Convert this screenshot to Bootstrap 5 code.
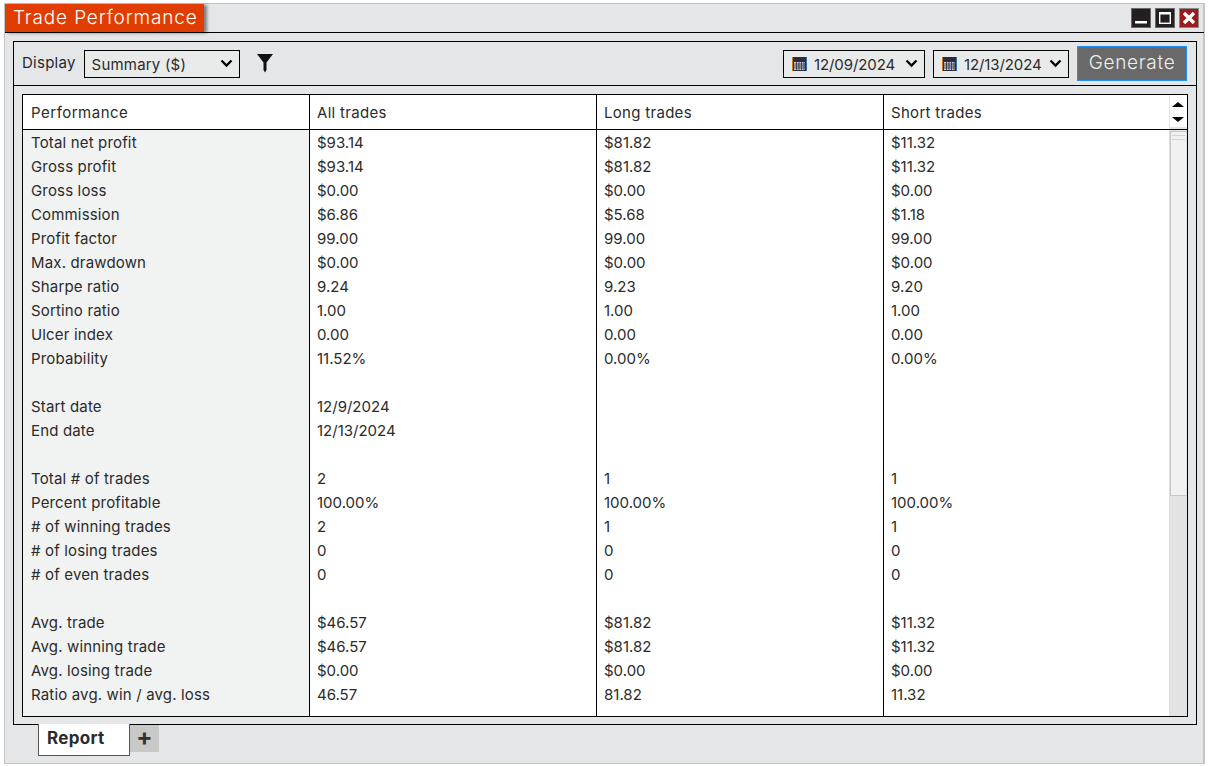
<!DOCTYPE html>
<html lang="en">
<head>
  <meta charset="UTF-8">
  <title>Trade Performance</title>
  <link href="https://cdn.jsdelivr.net/npm/bootstrap@5.3.3/dist/css/bootstrap.min.css" rel="stylesheet">
  <style>
    html, body { height: 100%; }
    body { background: #fff; padding: 3px 4px 2px 4px; font-family: Inter, "Open Sans", sans-serif; font-size: 15px; color: #2b2b2b; overflow: hidden; }
    .win { height: 761px; width: 1201px; background: #e5e6e8; border: 1px solid #c4c4c4; border-right-width: 2px; }
    .title-row { height: 29px; border-bottom: 1px solid #000; margin-right: -1px; }
    .title-tag { height: 28px; width: 199px; background: #e23d00; color: #fff; font-size: 19px; font-weight: 300; letter-spacing: .85px; line-height: 27px; padding-left: 8px; box-shadow: 3px 1px 3px rgba(0,0,0,.45); white-space: nowrap; }
    .win-btns { gap: 4px; padding: 4px 5px 0 0; }
    .win-btn { width: 20px; height: 20px; display: block; }
    .panel { margin: 8px 8px 0 8px; height: 684px; border: 1px solid #000; width: 1184px; }
    .tools { height: 44px; border-bottom: 1px solid #000; padding: 0 9px 0 8px; }
    .tool-label { font-size: 15px; color: #1f2a33; letter-spacing: .25px; }
    .pick { height: 28px; background: #e9eaea; border: 1px solid #000; color: #2b2b2b; font-size: 15px; padding: 3px 6px 0 7px; }
    .pick-arrow { margin-top: -3px; }
    .pick-display { width: 156px; margin-left: 8px; letter-spacing: .2px; }
    .pick-date1 { width: 142px; letter-spacing: -.1px; padding-left: 8px; }
    .pick-date2 { width: 136px; margin-left: 8px; margin-right: 8px; letter-spacing: -.1px; padding-left: 8px; }
    .date-ico { margin-top: -2px; margin-right: -1px; }
    .filter-ico { margin-left: 17px; margin-top: -1px; }
    .gen-btn { width: 110px; height: 35px; background: #696969; border: 1px solid #1e90ff; color: #eee; font-size: 19px; font-weight: 300; letter-spacing: .7px; padding: 0; }
    .sheet { margin: 8px 8px 0 8px; height: 623px; width: 1166px; background: #fff; border: 1px solid #000; }
    .head-row { height: 35px; border-bottom: 1px solid #000; }
    .col-cell { width: 287px; flex: none; padding-left: 7px; border-right: 1px solid #000; letter-spacing: .3px; line-height: 35px; }
    .col-cell.first { padding-left: 8px; letter-spacing: .5px; }
    .col-last { flex: 1; border-right: 0; }
    .spin-box { width: 18px; background: #fff; box-shadow: inset 1px 0 0 #e4e4e4, inset 0 -2px 0 #e4e4e4; padding-top: 7px; gap: 10px; }
    .spin-box svg { display: block; }
    .body-row { height: 586px; overflow: hidden; }
    .tbl-col { flex: none; width: 287px; border-right: 1px solid #000; padding: 1px 0 0 7px; }
    .tbl-col.first { background: #f1f2f2; padding-left: 8px; letter-spacing: .16px; }
    .tbl-col.last { flex: 1; border-right: 0; }
    .tbl-line { height: 24px; line-height: 24px; white-space: nowrap; }
    .sbar { width: 18px; background: #e3e3e3; border-left: 1px solid #dcdcdc; }
    .sthumb { height: 365px; margin-top: 1px; background: #f1f1f1; border: 1px solid #c8c8c8; border-right-color: #e3e3e3; padding: 3px 1px 0; }
    .grip { height: 5px; border-top: 1px solid #d4d4d4; border-bottom: 1px solid #d4d4d4; }
    .tabs-row { padding-left: 33px; }
    .tab-on { width: 92px; height: 32px; margin-top: -1px; background: #fff; border: 1px solid #555; border-top: 0; font-weight: 700; font-size: 17px; letter-spacing: .3px; line-height: 29px; padding-left: 8px; position: relative; }
    .tab-add { width: 29px; height: 27px; background: #c8c8c8; color: #333; font-weight: 700; font-size: 24px; line-height: 24px; text-align: center; }
  </style>
</head>
<body>
  <div class="win">
    <div class="title-row d-flex justify-content-between">
      <div class="title-tag">Trade Performance</div>
      <div class="win-btns d-flex">
        <svg class="win-btn" viewBox="0 0 20 20"><rect x=".5" y=".5" width="19" height="19" fill="#231f20" stroke="#6a6a6a"/><rect x="4" y="13" width="12" height="2.5" fill="#fff"/></svg>
        <svg class="win-btn" viewBox="0 0 20 20"><rect x=".5" y=".5" width="19" height="19" fill="#231f20" stroke="#6a6a6a"/><rect x="4.7" y="4.7" width="10.6" height="10.6" fill="none" stroke="#fff" stroke-width="1.4"/><rect x="4" y="4" width="12" height="2.5" fill="#fff"/></svg>
        <svg class="win-btn" viewBox="0 0 20 20"><rect x=".5" y=".5" width="19" height="19" fill="#9b1c20" stroke="#8a8a8a"/><path d="M5 5l10 10M15 5L5 15" stroke="#fff" stroke-width="3.4"/></svg>
      </div>
    </div>

    <div class="panel">
      <div class="tools d-flex align-items-center">
        <span class="tool-label">Display</span>
        <div class="pick pick-display d-flex align-items-center justify-content-between">
          <span>Summary ($)</span>
          <svg class="pick-arrow" width="13" height="9" viewBox="0 0 13 9"><path d="M1.5 1.5l5 5 5-5" fill="none" stroke="#000" stroke-width="2.3"/></svg>
        </div>
        <svg class="filter-ico" width="16" height="20" viewBox="0 0 16 20"><path d="M0 1h16L9.5 9.5V17L8 19.5 6.5 17V9.5z" fill="#111"/></svg>
        <div class="d-flex align-items-center ms-auto">
          <div class="pick pick-date1 d-flex align-items-center justify-content-between">
            <span class="d-flex align-items-center gap-2">
              <svg class="date-ico" width="15" height="14" viewBox="0 0 15 14"><rect width="15" height="14" fill="#2b2b3a"/><rect width="1" height="14" fill="#c9761e"/><rect x="14" width="1" height="14" fill="#2f6fb5"/><path d="M2 5h11v8H2z" fill="#cfd3e0"/><path d="M2 7h11M2 9h11M2 11h11M4.5 5v8M7 5v8M9.5 5v8M12 5v8" stroke="#2b2b3a" stroke-width=".8"/></svg>
              12/09/2024
            </span>
            <svg class="pick-arrow" width="13" height="9" viewBox="0 0 13 9"><path d="M1.5 1.5l5 5 5-5" fill="none" stroke="#000" stroke-width="2.3"/></svg>
          </div>
          <div class="pick pick-date2 d-flex align-items-center justify-content-between">
            <span class="d-flex align-items-center gap-2">
              <svg class="date-ico" width="15" height="14" viewBox="0 0 15 14"><rect width="15" height="14" fill="#2b2b3a"/><rect width="1" height="14" fill="#c9761e"/><rect x="14" width="1" height="14" fill="#2f6fb5"/><path d="M2 5h11v8H2z" fill="#cfd3e0"/><path d="M2 7h11M2 9h11M2 11h11M4.5 5v8M7 5v8M9.5 5v8M12 5v8" stroke="#2b2b3a" stroke-width=".8"/></svg>
              12/13/2024
            </span>
            <svg class="pick-arrow" width="13" height="9" viewBox="0 0 13 9"><path d="M1.5 1.5l5 5 5-5" fill="none" stroke="#000" stroke-width="2.3"/></svg>
          </div>
          <button class="gen-btn">Generate</button>
        </div>
      </div>

      <div class="sheet">
        <div class="head-row d-flex">
          <div class="col-cell first">Performance</div>
          <div class="col-cell">All trades</div>
          <div class="col-cell">Long trades</div>
          <div class="col-cell col-last">Short trades</div>
          <div class="spin-box d-flex flex-column align-items-center">
            <svg width="12" height="5" viewBox="0 0 12 5"><path d="M6 0l6 5H0z" fill="#000"/></svg>
            <svg width="12" height="5" viewBox="0 0 12 5"><path d="M6 5l6-5H0z" fill="#000"/></svg>
          </div>
        </div>
        <div class="body-row d-flex">
          <div class="tbl-col first" id="c0"></div>
          <div class="tbl-col" id="c1"></div>
          <div class="tbl-col" id="c2"></div>
          <div class="tbl-col last" id="c3"></div>
          <div class="sbar"><div class="sthumb"><div class="grip"></div></div></div>
        </div>
      </div>
    </div>

    <div class="tabs-row d-flex">
      <div class="tab-on">Report</div>
      <div class="tab-add">+</div>
    </div>
  </div>

  <script>
    const rows = [
      ["Total net profit", "$93.14", "$81.82", "$11.32"],
      ["Gross profit", "$93.14", "$81.82", "$11.32"],
      ["Gross loss", "$0.00", "$0.00", "$0.00"],
      ["Commission", "$6.86", "$5.68", "$1.18"],
      ["Profit factor", "99.00", "99.00", "99.00"],
      ["Max. drawdown", "$0.00", "$0.00", "$0.00"],
      ["Sharpe ratio", "9.24", "9.23", "9.20"],
      ["Sortino ratio", "1.00", "1.00", "1.00"],
      ["Ulcer index", "0.00", "0.00", "0.00"],
      ["Probability", "11.52%", "0.00%", "0.00%"],
      ["", "", "", ""],
      ["Start date", "12/9/2024", "", ""],
      ["End date", "12/13/2024", "", ""],
      ["", "", "", ""],
      ["Total # of trades", "2", "1", "1"],
      ["Percent profitable", "100.00%", "100.00%", "100.00%"],
      ["# of winning trades", "2", "1", "1"],
      ["# of losing trades", "0", "0", "0"],
      ["# of even trades", "0", "0", "0"],
      ["", "", "", ""],
      ["Avg. trade", "$46.57", "$81.82", "$11.32"],
      ["Avg. winning trade", "$46.57", "$81.82", "$11.32"],
      ["Avg. losing trade", "$0.00", "$0.00", "$0.00"],
      ["Ratio avg. win / avg. loss", "46.57", "81.82", "11.32"]
    ];
    // fill each column line by line
    rows.forEach((row) => {
      row.forEach((val, i) => {
        const d = document.createElement("div");
        d.className = "tbl-line";
        d.textContent = val;
        document.getElementById("c" + i).appendChild(d);
      });
    });
  </script>
  <script src="https://cdn.jsdelivr.net/npm/bootstrap@5.3.3/dist/js/bootstrap.bundle.min.js"></script>
</body>
</html>
